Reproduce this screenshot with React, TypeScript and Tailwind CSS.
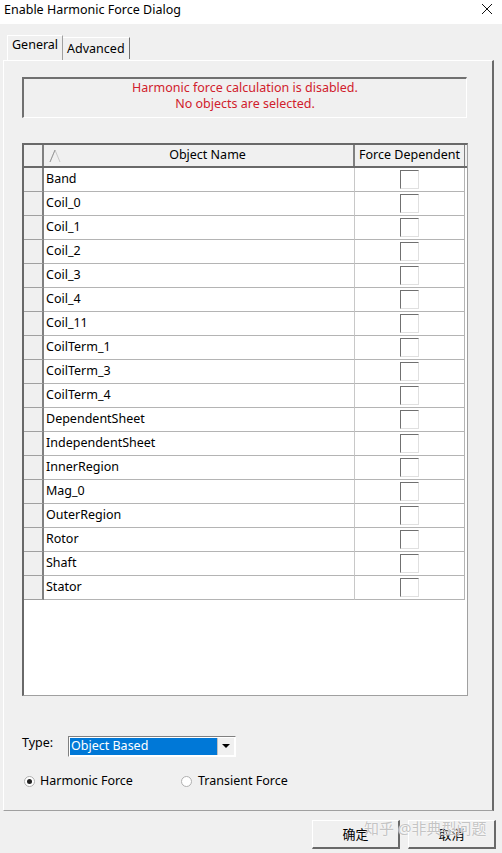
const rows = [
  'Band',
  'Coil_0',
  'Coil_1',
  'Coil_2',
  'Coil_3',
  'Coil_4',
  'Coil_11',
  'CoilTerm_1',
  'CoilTerm_3',
  'CoilTerm_4',
  'DependentSheet',
  'IndependentSheet',
  'InnerRegion',
  'Mag_0',
  'OuterRegion',
  'Rotor',
  'Shaft',
  'Stator',
];

const font = { fontFamily: '"Noto Sans", "Noto Sans CJK SC", sans-serif' };

export default function App() {
  return (
    <div
      className="relative w-[502px] h-[853px] bg-[#f0f0f0] text-[12.5px] text-black overflow-hidden flex flex-col"
      style={font}
    >
      {/* title bar */}
      <div className="h-[24px] bg-white flex items-center justify-between pl-[4px] pr-[9px] shrink-0">
        <span className="leading-none -mt-[3px] text-[12.5px]">Enable Harmonic Force Dialog</span>
        <svg width="12" height="12" viewBox="0 0 12 12" className="-mt-[6px]">
          <path d="M1 1 L11 11 M11 1 L1 11" stroke="#111" strokeWidth="1" />
        </svg>
      </div>

      {/* tabs */}
      <div className="flex items-end pl-[7px] mt-[11px] h-[25px] shrink-0 relative z-10">
        <div className="h-[25px] px-[4px] bg-[#f0f0f0] border-t border-l border-white border-r border-r-[#a0a0a0] flex items-start pt-[2px] leading-none">
          <span className="mt-[1px]">General</span>
        </div>
        <div className="h-[22px] px-[4px] border-t border-white border-r border-r-[#707070] flex items-start pt-[3px] leading-none mb-[1px]">
          <span className="mt-[2px]">Advanced</span>
        </div>
      </div>

      {/* panel */}
      <div className="mx-[3px] w-[491px] h-[751px] border-t border-l border-white border-r-2 border-b border-r-[#6a6a6a] border-b-[#a0a0a0] flex flex-col pl-[18px] shrink-0">
        {/* message */}
        <div className="mt-[16px] w-[445px] h-[41px] border-t-2 border-l-2 border-t-[#707070] border-l-[#707070] border-r border-b border-r-white border-b-white flex flex-col items-center pt-[1px] text-[#d0202c] leading-[16px]">
          <span>Harmonic force calculation is disabled.</span>
          <span>No objects are selected.</span>
        </div>

        {/* grid */}
        <div className="mt-[25px] w-[446px] h-[553px] bg-white border-t-2 border-l-2 border-t-[#696969] border-l-[#696969] border-r border-b border-r-[#a0a0a0] border-b-[#a0a0a0] flex flex-col">
          <div className="flex h-[23px] bg-[#f0f0f0] border-b-2 border-b-[#696969] shrink-0">
            <div className="w-[20px] border-r-2 border-r-[#808080]" />
            <div className="w-[311px] border-r-2 border-r-[#808080] flex items-center relative">
              <svg width="14" height="14" viewBox="0 0 14 14" className="absolute left-[4px] top-[4px]">
                <path d="M2 13 L7 1 L12 13" stroke="#c8c8c8" strokeWidth="1" fill="none" />
                <path d="M2 13 L7 1" stroke="#9a9a9a" strokeWidth="1" fill="none" />
              </svg>
              <span className="w-full text-center pl-[18px]">Object Name</span>
            </div>
            <div className="w-[110px] border-r border-r-[#808080] flex items-center justify-center">
              Force Dependent
            </div>
          </div>
          {rows.map((r) => (
            <div key={r} className="flex h-[24px] shrink-0">
              <div className="w-[20px] bg-[#f0f0f0] border-r-2 border-r-[#808080] border-b border-b-[#a0a0a0]" />
              <div className="w-[311px] border-r border-r-[#c8c8c8] border-b border-b-[#b4b4b4] flex items-center pl-[2px]">
                {r}
              </div>
              <div className="w-[110px] border-r border-r-[#b4b4b4] border-b border-b-[#b4b4b4] flex justify-center pt-[2px]">
                <div className="w-[19px] h-[19px] border-t border-l border-t-[#707070] border-l-[#707070] border-r border-b border-r-[#e0e0e0] border-b-[#e0e0e0] bg-white" />
              </div>
            </div>
          ))}
        </div>

        {/* type */}
        <div className="mt-[40px] flex items-center h-[21px]">
          <span className="w-[46px] -mt-[6px]">Type:</span>
          <div className="w-[168px] h-[21px] border-t border-l border-t-[#808080] border-l-[#808080] border-r border-b border-r-white border-b-white flex p-[1px] bg-white">
            <div className="flex-1 bg-[#0078d7] text-white flex items-center pl-[1px] leading-none">Object Based</div>
            <div className="w-[17px] bg-[#f0f0f0] border-l border-l-[#c0c0c0] flex items-center justify-center">
              <svg width="8" height="5" viewBox="0 0 8 5">
                <path d="M0 0 L8 0 L4 4 Z" fill="#000" />
              </svg>
            </div>
          </div>
        </div>

        {/* radios */}
        <div className="mt-[16px] flex items-center h-[16px]">
          <div className="flex items-center gap-[5px] w-[159px]">
            <span className="w-[11px] h-[11px] rounded-full border border-[#b0b0b0] bg-white flex items-center justify-center ml-[2px]">
              <span className="w-[5px] h-[5px] rounded-full bg-[#222]" />
            </span>
            <span>Harmonic Force</span>
          </div>
          <div className="flex items-center gap-[6px]">
            <span className="w-[11px] h-[11px] rounded-full border border-[#b0b0b0] bg-white" />
            <span>Transient Force</span>
          </div>
        </div>
      </div>

      {/* buttons */}
      <div className="flex justify-end gap-[8px] pr-[6px] mt-[9px]">
        <button className="w-[88px] h-[29px] bg-[#f0f0f0] border-t border-l border-white border-r-2 border-b-2 border-r-[#696969] border-b-[#696969] text-[13px] pt-[2px]">
          确定
        </button>
        <button className="w-[88px] h-[29px] bg-[#f0f0f0] border-t border-l border-white border-r-2 border-b-2 border-r-[#696969] border-b-[#696969] text-[13px] pt-[2px]">
          取消
        </button>
      </div>

      {/* watermark */}
      <div
        className="absolute left-[364px] top-[818px] text-[15px] leading-[20px] whitespace-nowrap text-[#c4c4c4] pointer-events-none"
        style={{ textShadow: '0 0 2px #fff, 0 0 1px #fff' }}
      >
        知乎 @非典型问题
      </div>
    </div>
  );
}
